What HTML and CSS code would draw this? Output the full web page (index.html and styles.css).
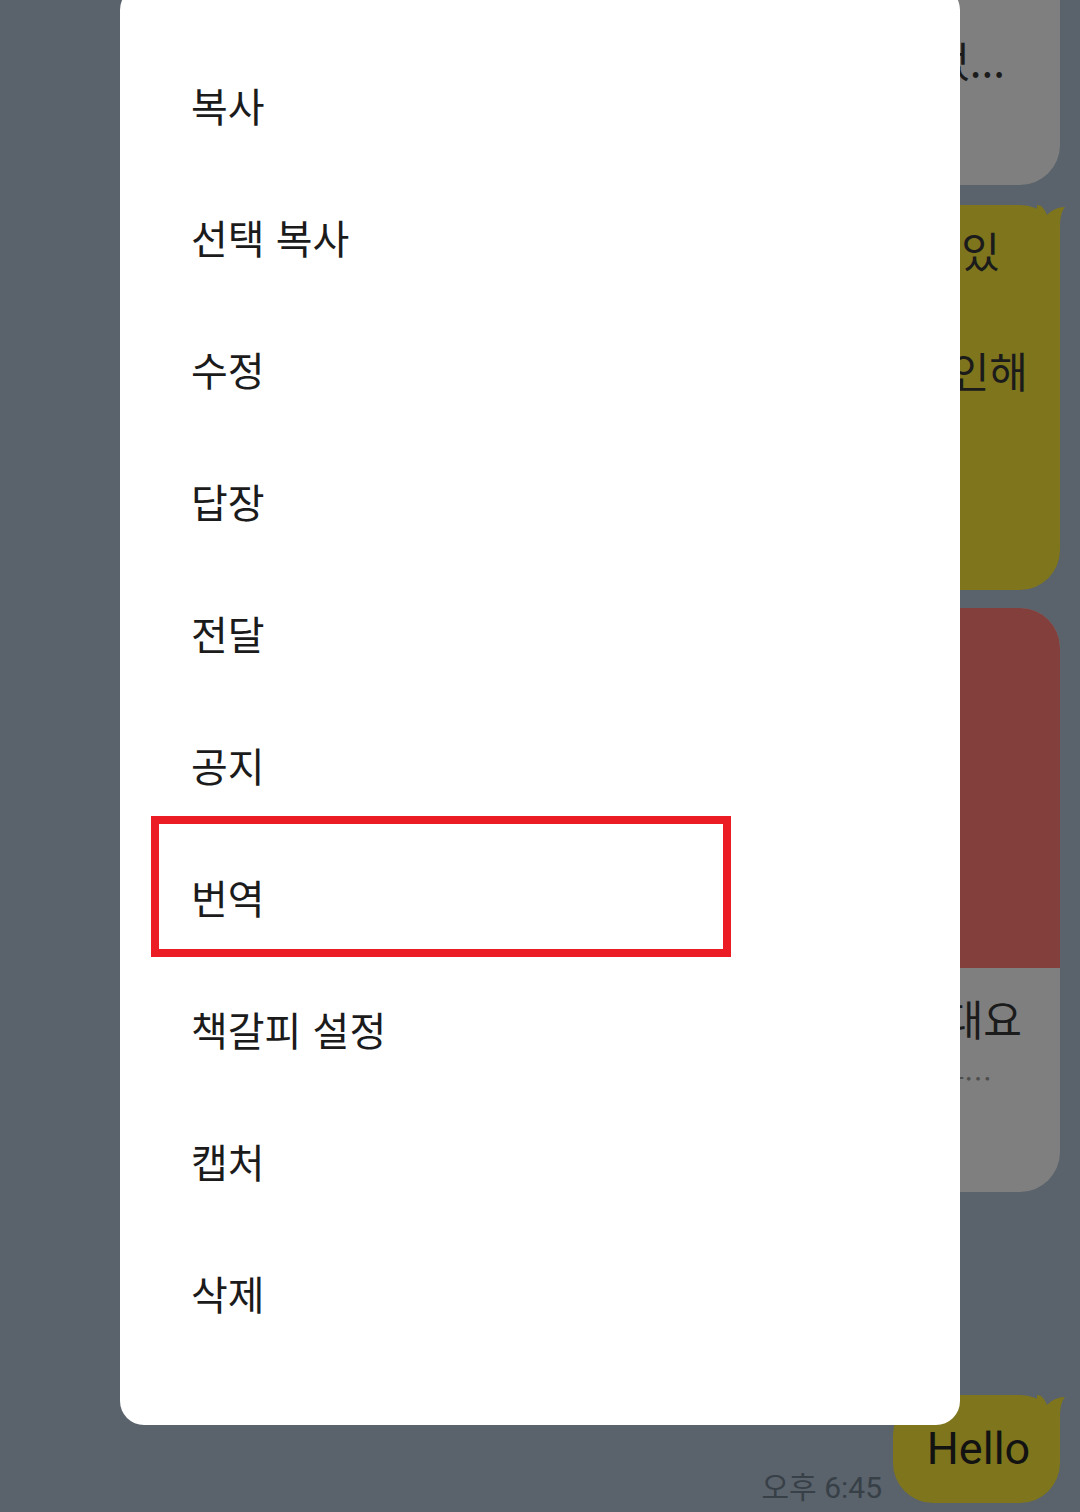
FILE: index.html
```html
<!DOCTYPE html>
<html lang="ko">
<head>
<meta charset="utf-8">
<title>메시지 메뉴</title>
<link rel="stylesheet" href="styles.css">
</head>
<body>
<div class="chat">
  <div class="bubble gray b1">
    <div class="line l-first">그때 말씀드렸었...</div>
  </div>
  <div class="bubble olive b2">
    <svg class="tail" viewBox="0 0 30 40" width="30" height="40"><path d="M0 0 C5 0 8 5 10 10 C14 6 20 2 28 2 C24 7 23 14 23 22 L23 40 L0 40 Z" fill="#7e751d"/></svg>
    <div class="line l-a">오늘 시간 있</div>
    <div class="line l-b">으신가요</div>
    <div class="line l-c">일정 변경으로 인해</div>
  </div>
  <div class="bubble media">
    <div class="thumb"></div>
    <div class="caption">
      <div class="cap-title">일정 공유드린대요</div>
      <div class="cap-sub">참고해 주세요 안녕하…</div>
    </div>
  </div>
  <div class="last-row">
    <span class="time">오후 6:45</span>
    <div class="bubble olive hello">
      <svg class="tail" viewBox="0 0 30 40" width="30" height="40"><path d="M0 0 C5 0 8 5 10 10 C14 6 20 2 28 2 C24 7 23 14 23 22 L23 40 L0 40 Z" fill="#7e751d"/></svg>
      <span class="hello-text">Hello</span>
    </div>
  </div>
</div>

<div class="menu">
  <div class="item">복사</div>
  <div class="item">선택 복사</div>
  <div class="item">수정</div>
  <div class="item">답장</div>
  <div class="item">전달</div>
  <div class="item">공지</div>
  <div class="item highlight">번역</div>
  <div class="item">책갈피 설정</div>
  <div class="item">캡처</div>
  <div class="item">삭제</div>
</div>
</body>
</html>
```

FILE: styles.css
```css
html, body {
  margin: 0;
  padding: 0;
}
body {
  width: 1080px;
  height: 1512px;
  overflow: hidden;
  position: relative;
  background: #5a636b;
  font-family: "Noto Sans CJK KR", "Noto Sans", sans-serif;
  color: #1b1b1b;
}

.chat {
  display: flex;
  flex-direction: column;
  align-items: flex-end;
  padding-right: 20px;
}

.bubble {
  position: relative;
  border-radius: 40px;
  font-size: 42px;
  box-sizing: border-box;
}
.gray { background: #7f7f7f; }
.olive { background: #7e751d; }

.b1 {
  margin-top: -60px;
  height: 245px;
  width: 560px;
  padding-top: 90px;
  padding-right: 55px;
}
.line {
  height: 60px;
  line-height: 60px;
  white-space: nowrap;
  text-align: right;
}

.b2 {
  margin-top: 20px;
  height: 385px;
  width: 560px;
  padding-top: 15px;
  padding-right: 32px;
}
.l-a { padding-right: 28px; }
.l-b { padding-right: 140px; }

.tail {
  position: absolute;
  top: 0;
  right: -7px;
  display: block;
}

.media {
  margin-top: 18px;
  width: 560px;
  height: 584px;
  overflow: hidden;
  display: flex;
  flex-direction: column;
  background: #7f7f7f;
}
.thumb {
  height: 360px;
  background: #823f3c;
}
.caption {
  padding-top: 20px;
  padding-right: 38px;
  text-align: right;
  white-space: nowrap;
}
.cap-title {
  font-size: 42px;
  line-height: 60px;
}
.cap-sub {
  font-size: 28px;
  line-height: 40px;
  color: #4e4e4e;
  padding-right: 30px;
  margin-top: 10px;
}

.last-row {
  margin-top: 203px;
  display: flex;
  align-items: flex-end;
  gap: 11px;
}
.time {
  font-family: Roboto, "Noto Sans CJK KR", sans-serif;
  font-size: 30px;
  line-height: 34px;
  color: #373f47;
  margin-bottom: -2px;
}
.hello {
  width: 167px;
  height: 108px;
  font-family: Roboto, "Noto Sans", sans-serif;
  font-size: 45px;
  line-height: 108px;
  text-align: center;
  color: #121212;
}
.hello-text {
  position: relative;
  left: 2px;
}

.menu {
  position: absolute;
  left: 120px;
  top: -14px;
  width: 840px;
  height: 1439px;
  box-sizing: border-box;
  background: #ffffff;
  border-radius: 24px;
  padding: 53px 0 0 71px;
}
.item {
  position: relative;
  height: 132px;
  line-height: 132px;
  font-size: 40px;
  color: #1b1b1b;
  white-space: nowrap;
}
.highlight::after {
  content: "";
  position: absolute;
  left: -40px;
  top: -15px;
  width: 580px;
  height: 141px;
  box-sizing: border-box;
  border: 8px solid #ec1c24;
}
```
